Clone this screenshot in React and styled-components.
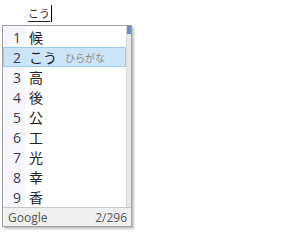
import React from 'react';
import styled, { createGlobalStyle } from 'styled-components';

const candidates = ['候', 'こう', '高', '後', '公', '工', '光', '幸', '香'];

const Global = createGlobalStyle`
  body {
    margin: 0;
    background: #fff;
    font-family: "Noto Sans", "Noto Sans CJK JP", sans-serif;
  }
`;

const Page = styled.div`
  width: 300px;
  height: 235px;
  padding-top: 5px;
  box-sizing: border-box;
`;

const Composition = styled.div`
  display: flex;
  align-items: flex-end;
  margin-left: 28px;
  height: 17px;
`;

const Typed = styled.span`
  font-family: "Noto Sans CJK JP", sans-serif;
  font-size: 11px;
  line-height: 15px;
  color: #222;
  border-bottom: 1.5px solid #222;
`;

const Caret = styled.span`
  width: 1px;
  height: 17px;
  background: #000;
  margin-left: 1px;
`;

const Popup = styled.div`
  margin: 3px 0 0 2px;
  width: 130px;
  border: 1px solid #a0a0a0;
  box-shadow: 2px 2px 2px rgba(0, 0, 0, 0.25);
  background: #fff;
  box-sizing: border-box;
`;

const Body = styled.div`
  display: flex;
`;

const List = styled.div`
  flex: 1;
  padding-top: 1px;
  background: linear-gradient(to right, #f5f5fb 0 22px, #fff 22px);
`;

const Row = styled.div`
  display: flex;
  align-items: center;
  height: 20px;
  box-sizing: border-box;
  border: 1px solid ${p => (p.$active ? '#99c9ef' : 'transparent')};
  background: ${p => (p.$active ? '#cce4f7' : 'transparent')};
`;

const Num = styled.span`
  width: 25px;
  padding-left: 9px;
  box-sizing: border-box;
  font-size: 14px;
  color: #3a3a4a;
  font-family: "Open Sans", "Noto Sans", sans-serif;
`;

const Word = styled.span`
  font-family: "Noto Sans CJK JP", sans-serif;
  font-size: 14px;
  color: #222;
  line-height: 18px;
`;

const Hint = styled.span`
  margin-left: 8px;
  font-family: "Noto Sans CJK JP", sans-serif;
  font-size: 10px;
  color: #8a8a8a;
`;

const Scroll = styled.div`
  width: 4px;
  background: #e8e8e8;
  border-left: 1px solid #d8d8d8;
`;

const Thumb = styled.div`
  height: 8px;
  background: #6f8fb8;
`;

const Footer = styled.div`
  display: flex;
  justify-content: space-between;
  align-items: center;
  height: 18px;
  padding: 0 4px 0 5px;
  border-top: 1px solid #c8c8c8;
  background: #f0f0f0;
  font-family: "Open Sans", "Noto Sans", sans-serif;
  font-size: 12px;
  color: #555;
`;

export default function App() {
  return (
    <Page>
      <Global />
      <Composition>
        <Typed>こう</Typed>
        <Caret />
      </Composition>
      <Popup>
        <Body>
          <List>
            {candidates.map((c, i) => (
              <Row key={c} $active={i === 1}>
                <Num>{i + 1}</Num>
                <Word>{c}</Word>
                {i === 1 && <Hint>ひらがな</Hint>}
              </Row>
            ))}
          </List>
          <Scroll>
            <Thumb />
          </Scroll>
        </Body>
        <Footer>
          <span>Google</span>
          <span>2/296</span>
        </Footer>
      </Popup>
    </Page>
  );
}
